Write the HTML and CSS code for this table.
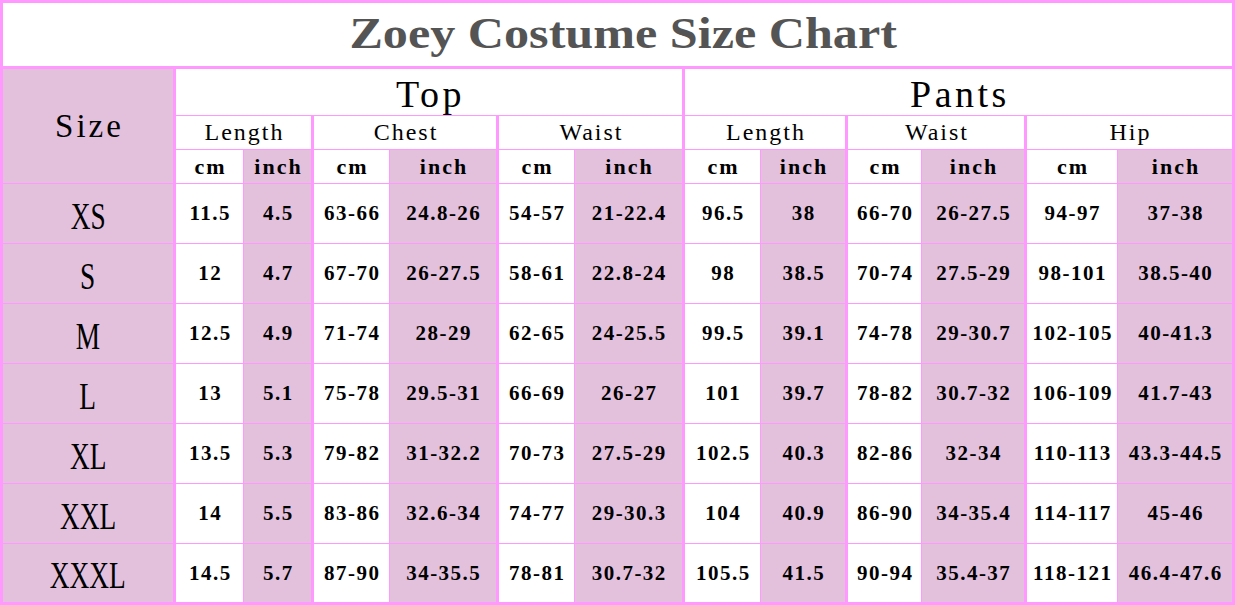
FILE: index.html
```html
<!DOCTYPE html>
<html>
<head>
<meta charset="utf-8">
<title>Zoey Costume Size Chart</title>
<link rel="stylesheet" href="styles.css">
</head>
<body>
<div class="chart">
  <div class="title"><span class="t">Zoey Costume Size Chart</span></div>
  <div class="size-h"><span class="t">Size</span></div>
  <div class="part"><span class="t">Top</span></div>
  <div class="part"><span class="t">Pants</span></div>
  <div class="grp"><span class="t">Length</span></div>
  <div class="grp"><span class="t">Chest</span></div>
  <div class="grp"><span class="t">Waist</span></div>
  <div class="grp"><span class="t">Length</span></div>
  <div class="grp"><span class="t">Waist</span></div>
  <div class="grp"><span class="t">Hip</span></div>
  <div class="unit"><span class="t">cm</span></div><div class="unit inch"><span class="t">inch</span></div>
  <div class="unit"><span class="t">cm</span></div><div class="unit inch"><span class="t">inch</span></div>
  <div class="unit"><span class="t">cm</span></div><div class="unit inch"><span class="t">inch</span></div>
  <div class="unit"><span class="t">cm</span></div><div class="unit inch"><span class="t">inch</span></div>
  <div class="unit"><span class="t">cm</span></div><div class="unit inch"><span class="t">inch</span></div>
  <div class="unit"><span class="t">cm</span></div><div class="unit inch"><span class="t">inch</span></div>

  <div class="row">
    <div class="size"><span class="t">XS</span></div>
    <div class="v"><span class="t">11.5</span></div><div class="v inch"><span class="t">4.5</span></div>
    <div class="v"><span class="t">63-66</span></div><div class="v inch"><span class="t">24.8-26</span></div>
    <div class="v"><span class="t">54-57</span></div><div class="v inch"><span class="t">21-22.4</span></div>
    <div class="v"><span class="t">96.5</span></div><div class="v inch"><span class="t">38</span></div>
    <div class="v"><span class="t">66-70</span></div><div class="v inch"><span class="t">26-27.5</span></div>
    <div class="v"><span class="t">94-97</span></div><div class="v inch"><span class="t">37-38</span></div>
  </div>
  <div class="row">
    <div class="size"><span class="t">S</span></div>
    <div class="v"><span class="t">12</span></div><div class="v inch"><span class="t">4.7</span></div>
    <div class="v"><span class="t">67-70</span></div><div class="v inch"><span class="t">26-27.5</span></div>
    <div class="v"><span class="t">58-61</span></div><div class="v inch"><span class="t">22.8-24</span></div>
    <div class="v"><span class="t">98</span></div><div class="v inch"><span class="t">38.5</span></div>
    <div class="v"><span class="t">70-74</span></div><div class="v inch"><span class="t">27.5-29</span></div>
    <div class="v"><span class="t">98-101</span></div><div class="v inch"><span class="t">38.5-40</span></div>
  </div>
  <div class="row">
    <div class="size"><span class="t">M</span></div>
    <div class="v"><span class="t">12.5</span></div><div class="v inch"><span class="t">4.9</span></div>
    <div class="v"><span class="t">71-74</span></div><div class="v inch"><span class="t">28-29</span></div>
    <div class="v"><span class="t">62-65</span></div><div class="v inch"><span class="t">24-25.5</span></div>
    <div class="v"><span class="t">99.5</span></div><div class="v inch"><span class="t">39.1</span></div>
    <div class="v"><span class="t">74-78</span></div><div class="v inch"><span class="t">29-30.7</span></div>
    <div class="v"><span class="t">102-105</span></div><div class="v inch"><span class="t">40-41.3</span></div>
  </div>
  <div class="row">
    <div class="size"><span class="t">L</span></div>
    <div class="v"><span class="t">13</span></div><div class="v inch"><span class="t">5.1</span></div>
    <div class="v"><span class="t">75-78</span></div><div class="v inch"><span class="t">29.5-31</span></div>
    <div class="v"><span class="t">66-69</span></div><div class="v inch"><span class="t">26-27</span></div>
    <div class="v"><span class="t">101</span></div><div class="v inch"><span class="t">39.7</span></div>
    <div class="v"><span class="t">78-82</span></div><div class="v inch"><span class="t">30.7-32</span></div>
    <div class="v"><span class="t">106-109</span></div><div class="v inch"><span class="t">41.7-43</span></div>
  </div>
  <div class="row">
    <div class="size"><span class="t">XL</span></div>
    <div class="v"><span class="t">13.5</span></div><div class="v inch"><span class="t">5.3</span></div>
    <div class="v"><span class="t">79-82</span></div><div class="v inch"><span class="t">31-32.2</span></div>
    <div class="v"><span class="t">70-73</span></div><div class="v inch"><span class="t">27.5-29</span></div>
    <div class="v"><span class="t">102.5</span></div><div class="v inch"><span class="t">40.3</span></div>
    <div class="v"><span class="t">82-86</span></div><div class="v inch"><span class="t">32-34</span></div>
    <div class="v"><span class="t">110-113</span></div><div class="v inch"><span class="t">43.3-44.5</span></div>
  </div>
  <div class="row">
    <div class="size"><span class="t">XXL</span></div>
    <div class="v"><span class="t">14</span></div><div class="v inch"><span class="t">5.5</span></div>
    <div class="v"><span class="t">83-86</span></div><div class="v inch"><span class="t">32.6-34</span></div>
    <div class="v"><span class="t">74-77</span></div><div class="v inch"><span class="t">29-30.3</span></div>
    <div class="v"><span class="t">104</span></div><div class="v inch"><span class="t">40.9</span></div>
    <div class="v"><span class="t">86-90</span></div><div class="v inch"><span class="t">34-35.4</span></div>
    <div class="v"><span class="t">114-117</span></div><div class="v inch"><span class="t">45-46</span></div>
  </div>
  <div class="row">
    <div class="size"><span class="t">XXXL</span></div>
    <div class="v"><span class="t">14.5</span></div><div class="v inch"><span class="t">5.7</span></div>
    <div class="v"><span class="t">87-90</span></div><div class="v inch"><span class="t">34-35.5</span></div>
    <div class="v"><span class="t">78-81</span></div><div class="v inch"><span class="t">30.7-32</span></div>
    <div class="v"><span class="t">105.5</span></div><div class="v inch"><span class="t">41.5</span></div>
    <div class="v"><span class="t">90-94</span></div><div class="v inch"><span class="t">35.4-37</span></div>
    <div class="v"><span class="t">118-121</span></div><div class="v inch"><span class="t">46.4-47.6</span></div>
  </div>
</div>
</body>
</html>
```

FILE: styles.css
```css
* {
  box-sizing: border-box;
  margin: 0;
  padding: 0;
}

html, body {
  background: #ffffff;
}

body {
  margin: 0;
  overflow: hidden;
}

.chart {
  display: grid;
  width: 1235px;
  height: 605px;
  grid-template-columns: 173px 68px 70px 76px 109px 76px 110px 76px 87px 74px 105px 91px 117px;
  grid-template-rows: 66px 47px 34px 34px repeat(6, 60px) 61px;
  border-top: 3px solid #ff99ff;
  border-left: 3px solid #ff99ff;
  font-family: "Liberation Serif", "Times New Roman", serif;
  color: #000000;
}

.row {
  display: contents;
}

.chart > div:not(.row),
.row > div {
  display: flex;
  align-items: center;
  justify-content: center;
  border: 0 solid #ff99ff;
  border-right-width: 1px;
  border-bottom-width: 1px;
  background: #ffffff;
  white-space: nowrap;
  overflow: visible;
}

.row:last-child > div {
  border-bottom-width: 3px;
}

.t {
  display: inline-block;
}

.title {
  grid-column: 1 / -1;
  border-right-width: 3px !important;
  border-bottom-width: 3px !important;
}

.title .t {
  font-weight: bold;
  font-size: 44px;
  color: #545454;
  transform: scaleX(1.14);
  margin-left: 12px;
  margin-top: -2px;
}

.size-h {
  grid-row: span 3;
  background: #e3c1dd !important;
  border-right-width: 3px !important;
  font-size: 33px;
  letter-spacing: 3px;
}

.size-h .t {
  margin-left: 3px;
}

.part {
  grid-column: span 6;
  border-right-width: 3px !important;
  font-size: 38px;
  letter-spacing: 3.5px;
}

.part .t {
  margin-top: 3px;
  margin-left: 3px;
}

.grp {
  grid-column: span 2;
  border-right-width: 3px !important;
  font-size: 24px;
  letter-spacing: 2px;
}

.grp .t {
  margin-left: 2px;
}

.unit {
  font-size: 22px;
  font-weight: bold;
  letter-spacing: 2px;
}

.unit .t {
  margin-left: 2px;
}

.inch {
  background: #e3c1dd !important;
  border-right-width: 3px !important;
}

.size {
  background: #e3c1dd !important;
  border-right-width: 3px !important;
  font-size: 38px;
}

.size .t {
  transform: scaleX(0.72);
  margin-top: 4px;
}

.v {
  font-size: 21px;
  font-weight: bold;
  letter-spacing: 1.5px;
}

.v .t {
  margin-left: 1.5px;
}
```
